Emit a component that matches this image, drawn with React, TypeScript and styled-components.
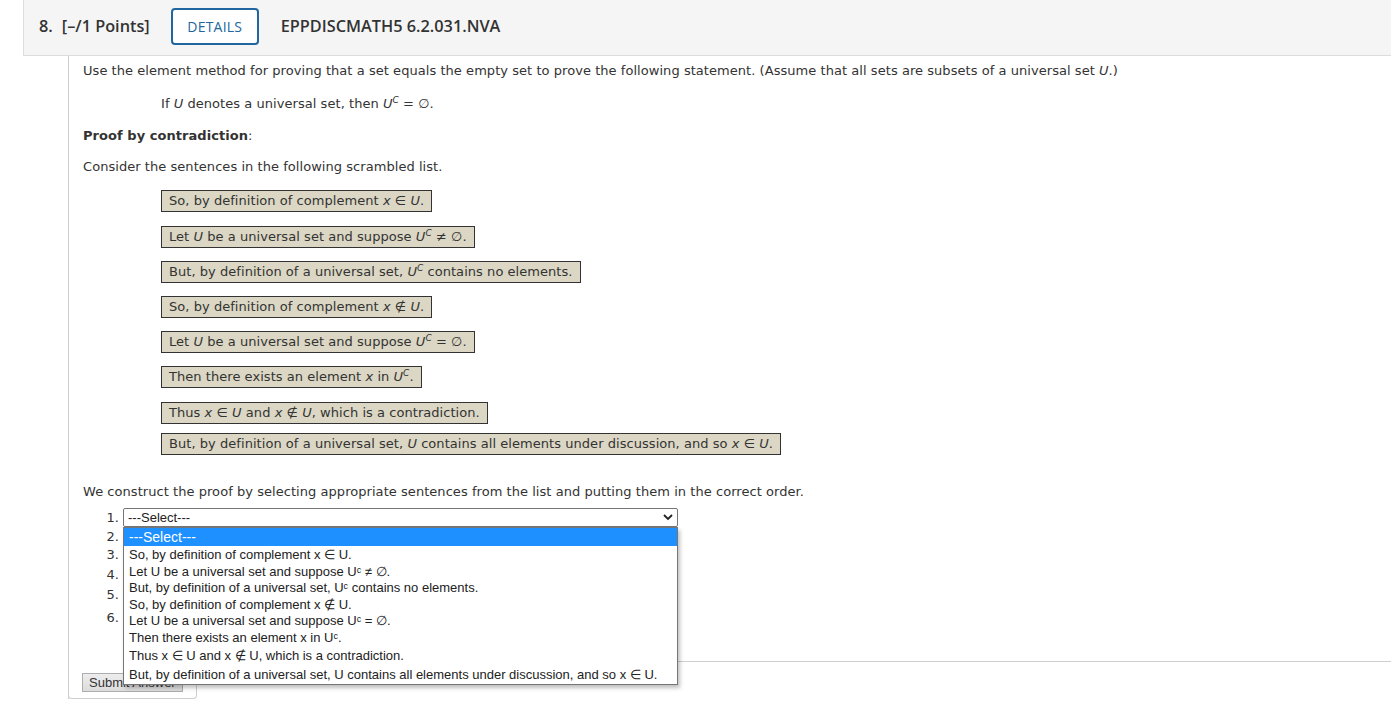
import React from 'react';
import styled, { createGlobalStyle } from 'styled-components';

const GlobalStyle = createGlobalStyle`
  html, body {
    margin: 0;
    padding: 0;
    background: #fff;
  }
  body {
    font-family: 'DejaVu Sans', Verdana, sans-serif;
    color: #333;
  }
`;

const Page = styled.div`
  width: 1391px;
  height: 702px;
  overflow: hidden;
  padding-left: 23px;
  box-sizing: border-box;
`;

const Header = styled.div`
  height: 56px;
  box-sizing: border-box;
  display: flex;
  align-items: center;
  padding: 0 0 3px 15px;
  background: #f5f5f5;
  border-left: 1px solid #dcdcdc;
  border-bottom: 1px solid #dcdcdc;
  font-family: 'Open Sans', sans-serif;
  font-weight: 600;
  font-size: 16.3px;
  color: #333;
`;

const Number = styled.span`
  margin-right: 9px;
`;

const Points = styled.span`
  margin-right: 21px;
`;

const DetailsButton = styled.button`
  width: 88px;
  height: 37px;
  border: 2px solid #2266a0;
  border-radius: 4px;
  background: #fff;
  color: #2266a0;
  font-family: 'Open Sans', sans-serif;
  font-size: 14px;
  font-weight: 500;
  letter-spacing: 0.2px;
  margin-right: 22px;
  padding: 0;
`;

const Code = styled.span``;

const Body = styled.div`
  margin-left: 45px;
  border-left: 1px solid #cfcfcf;
`;

const Content = styled.div`
  padding: 6px 0 31px 14px;
  border-bottom: 1px solid #cfcfcf;
  font-size: 13px;
  line-height: 17px;
  letter-spacing: 0.05px;
`;

const Para = styled.p<{ $top: number; $indent?: number }>`
  margin: ${({ $top }) => $top}px 0 0 ${({ $indent }) => $indent || 0}px;
`;

const Bold = styled.b`
  font-weight: bold;
`;

const V = styled.i`
  font-style: italic;
`;

const Sup = styled.sup`
  font-size: 9px;
  line-height: 0;
  vertical-align: 5px;
  font-style: italic;
`;

const Sentences = styled.div`
  margin: 15px 0 0 78px;
  display: flex;
  flex-direction: column;
  align-items: flex-start;
`;

const SentenceRow = styled.div<{ $h: number }>`
  height: ${({ $h }) => $h}px;
`;

const Sentence = styled.span`
  display: inline-block;
  background: #dbd7c4;
  border: 1px solid #333;
  padding: 2px 7px 2px 7px;
  line-height: 16px;
  white-space: nowrap;
`;

const OrderList = styled.div`
  margin: 8px 0 0 14px;
`;

const OrderRow = styled.div<{ $h: number }>`
  height: ${({ $h }) => $h}px;
  display: flex;
  align-items: center;
  position: relative;
`;

const OrderNum = styled.span`
  width: 22px;
  text-align: right;
  margin-right: 4px;
`;

const SelectBox = styled.div`
  position: relative;
  width: 555px;
  height: 19px;
  box-sizing: border-box;
  border: 1px solid #767676;
  border-radius: 2px;
  background: #fff;
  font-family: 'Liberation Sans', Arial, sans-serif;
  font-size: 13px;
  line-height: 17px;
  letter-spacing: 0;
  padding-left: 4px;
  color: #222;
`;

const Chevron = styled.svg`
  position: absolute;
  right: 4px;
  top: 5px;
`;

const Popup = styled.div`
  position: absolute;
  top: 19px;
  left: 26px;
  width: 555px;
  box-sizing: border-box;
  border: 1px solid #767676;
  background: #fff;
  box-shadow: 2px 3px 4px rgba(0, 0, 0, 0.25);
  z-index: 5;
  font-family: 'Liberation Sans', Arial, sans-serif;
  font-size: 13px;
  letter-spacing: 0;
  color: #222;
`;

const Option = styled.div<{ $h: number; $active?: boolean }>`
  height: ${({ $h }) => $h}px;
  display: flex;
  align-items: center;
  padding-left: 5px;
  background: ${({ $active }) => ($active ? '#1e90ff' : 'transparent')};
  color: ${({ $active }) => ($active ? '#fff' : '#222')};
  font-size: ${({ $active }) => ($active ? '14px' : 'inherit')};
  white-space: nowrap;
`;

const Tab = styled.div`
  width: 129px;
  height: 38px;
  box-sizing: border-box;
  margin-left: -1px;
  margin-top: -1px;
  background: #fff;
  border: 1px solid #cfcfcf;
  border-top: none;
  border-radius: 0 0 4px 4px;
  padding: 11px 0 0 13px;
`;

const SubmitButton = styled.button`
  width: 101px;
  height: 19px;
  padding: 0 0 0 6px;
  text-align: left;
  border: 1px solid #adadad;
  background: linear-gradient(#ededed, #dcdcdc);
  font-family: 'Liberation Sans', Arial, sans-serif;
  font-size: 13px;
  color: #333;
  white-space: nowrap;
`;

const Uc = () => (
  <>
    <V>U</V>
    <Sup>C</Sup>
  </>
);

const sentences: { h: number; node: React.ReactNode }[] = [
  { h: 36, node: <>So, by definition of complement <V>x</V> ∈ <V>U</V>.</> },
  { h: 35, node: <>Let <V>U</V> be a universal set and suppose <Uc /> ≠ ∅.</> },
  { h: 35, node: <>But, by definition of a universal set, <Uc /> contains no elements.</> },
  { h: 35, node: <>So, by definition of complement <V>x</V> ∉ <V>U</V>.</> },
  { h: 35, node: <>Let <V>U</V> be a universal set and suppose <Uc /> = ∅.</> },
  { h: 36, node: <>Then there exists an element <V>x</V> in <Uc />.</> },
  { h: 31, node: <>Thus <V>x</V> ∈ <V>U</V> and <V>x</V> ∉ <V>U</V>, which is a contradiction.</> },
  { h: 22, node: <>But, by definition of a universal set, <V>U</V> contains all elements under discussion, and so <V>x</V> ∈ <V>U</V>.</> },
];

const options: { h: number; text: string; active?: boolean }[] = [
  { h: 18, text: '---Select---', active: true },
  { h: 17, text: 'So, by definition of complement x ∈ U.' },
  { h: 16, text: 'Let U be a universal set and suppose Uᶜ ≠ ∅.' },
  { h: 17, text: 'But, by definition of a universal set, Uᶜ contains no elements.' },
  { h: 16, text: 'So, by definition of complement x ∉ U.' },
  { h: 17, text: 'Let U be a universal set and suppose Uᶜ = ∅.' },
  { h: 17, text: 'Then there exists an element x in Uᶜ.' },
  { h: 19, text: 'Thus x ∈ U and x ∉ U, which is a contradiction.' },
  { h: 19, text: 'But, by definition of a universal set, U contains all elements under discussion, and so x ∈ U.' },
];

const rowHeights = [19, 18, 19, 20, 20, 26];

export default function App() {
  return (
    <Page>
      <GlobalStyle />
      <Header>
        <Number>8.</Number>
        <Points>[–/1 Points]</Points>
        <DetailsButton type="button">DETAILS</DetailsButton>
        <Code>EPPDISCMATH5 6.2.031.NVA</Code>
      </Header>
      <Body>
        <Content>
          <Para $top={0}>
            Use the element method for proving that a set equals the empty set to prove the following
            statement. (Assume that all sets are subsets of a universal set <V>U</V>.)
          </Para>
          <Para $top={16} $indent={78}>
            If <V>U</V> denotes a universal set, then <Uc /> = ∅.
          </Para>
          <Para $top={15}>
            <Bold>Proof by contradiction</Bold>:
          </Para>
          <Para $top={14}>Consider the sentences in the following scrambled list.</Para>
          <Sentences>
            {sentences.map((s, i) => (
              <SentenceRow key={i} $h={s.h}>
                <Sentence>{s.node}</Sentence>
              </SentenceRow>
            ))}
          </Sentences>
          <Para $top={28}>
            We construct the proof by selecting appropriate sentences from the list and putting them in
            the correct order.
          </Para>
          <OrderList>
            {rowHeights.map((h, i) => (
              <OrderRow key={i} $h={h}>
                <OrderNum>{i + 1}.</OrderNum>
                <SelectBox>
                  ---Select---
                  <Chevron width="10" height="7" viewBox="0 0 10 7">
                    <path d="M1 1 L5 5 L9 1" fill="none" stroke="#222" strokeWidth="1.8" />
                  </Chevron>
                </SelectBox>
                {i === 0 && (
                  <Popup>
                    {options.map((o, j) => (
                      <Option key={j} $h={o.h} $active={o.active}>
                        {o.text}
                      </Option>
                    ))}
                  </Popup>
                )}
              </OrderRow>
            ))}
          </OrderList>
        </Content>
        <Tab>
          <SubmitButton type="button">Submit Answer</SubmitButton>
        </Tab>
      </Body>
    </Page>
  );
}
